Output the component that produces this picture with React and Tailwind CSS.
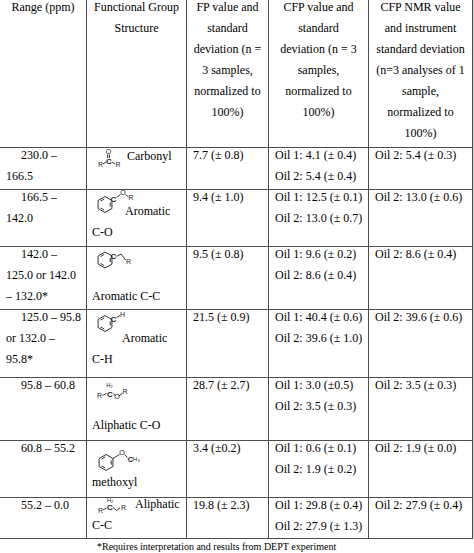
const ink = '#1a1a1a';

function L({ x, y, s = 7, b = false, children }) {
  return (
    <text x={x} y={y + s * 0.34} fontSize={s} fontWeight={b ? 700 : 400} textAnchor="middle" fill={ink} fontFamily="Liberation Sans, Arial, sans-serif">
      {children}
    </text>
  );
}

function Ring({ cx, cy, r = 8 }) {
  const pts = [-90, -30, 30, 90, 150, 210].map((a) => [cx + r * Math.cos((a * Math.PI) / 180), cy + r * Math.sin((a * Math.PI) / 180)]);
  const inner = [-90, -30, 30, 90, 150, 210].map((a) => [cx + (r - 2) * Math.cos((a * Math.PI) / 180), cy + (r - 2) * Math.sin((a * Math.PI) / 180)]);
  const seg = (p, q) => {
    const k = 0.15;
    return [p[0] + (q[0] - p[0]) * k, p[1] + (q[1] - p[1]) * k, q[0] - (q[0] - p[0]) * k, q[1] - (q[1] - p[1]) * k];
  };
  return (
    <g stroke={ink} strokeWidth="0.9" fill="none">
      <polygon points={pts.map((p) => p.join(',')).join(' ')} />
      {[[1, 2], [3, 4], [5, 0]].map(([a, b], i) => {
        const [x1, y1, x2, y2] = seg(inner[a], inner[b]);
        return <line key={i} x1={x1} y1={y1} x2={x2} y2={y2} />;
      })}
    </g>
  );
}

function Bonds({ d }) {
  return <path d={d} stroke={ink} strokeWidth="0.9" fill="none" />;
}

const Carbonyl = () => (
  <svg width="35" height="24" className="shrink-0 overflow-visible">
    <L x={16.5} y={6.5}>O</L>
    <Bonds d="M15.6 9.5 V13 M17.4 9.5 V13 M11 19 L14 17 M20 17 L23 19" />
    <L x={17} y={16} s={8} b>C</L>
    <L x={8.5} y={20}>R</L>
    <L x={26} y={19.5}>R</L>
  </svg>
);

const ArylO = () => (
  <svg width="45" height="24" className="block overflow-visible">
    <Ring cx={13} cy={17.5} />
    <L x={21.5} y={12} s={8} b>C</L>
    <Bonds d="M24.5 10.5 L28.5 7.5 M33.5 7.5 L36.5 10" />
    <L x={31} y={6}>O</L>
    <L x={39} y={11}>R</L>
  </svg>
);

const ArylC = () => (
  <svg width="45" height="42" className="block overflow-visible">
    <Ring cx={13} cy={16} />
    <L x={21.5} y={12.5} s={8} b>C</L>
    <Bonds d="M24.5 12.5 L29 10 L33.5 16" />
    <L x={36.5} y={17.5}>R</L>
  </svg>
);

const ArylH = () => (
  <svg width="45" height="26" className="block overflow-visible">
    <Ring cx={13} cy={16.5} />
    <L x={21.5} y={12} s={8} b>C</L>
    <Bonds d="M24.5 10.5 L28 8.5" />
    <L x={30.5} y={7.5}>H</L>
  </svg>
);

const AlkO = () => (
  <svg width="45" height="40" className="block overflow-visible">
    <L x={16.5} y={9.5} s={6}>H</L>
    <L x={19.5} y={11.5} s={4}>2</L>
    <Bonds d="M10.5 20.5 L14.5 18.5 M21.5 18.5 L23.5 21 M27 21 L30.5 18" />
    <L x={7.5} y={21}>R</L>
    <L x={18} y={19} s={8} b>C</L>
    <L x={25} y={22}>O</L>
    <L x={33} y={16.5}>R</L>
  </svg>
);

const Methoxy = () => (
  <svg width="50" height="34" className="block overflow-visible">
    <Ring cx={14} cy={24.5} />
    <Bonds d="M21 20.5 L27.5 16.5 M32.5 16.5 L35.5 19.5" />
    <L x={30} y={14.5}>O</L>
    <L x={38.5} y={21} s={7.5} b>C</L>
    <L x={43} y={21} s={6}>H</L>
    <L x={46.5} y={22.5} s={4}>3</L>
  </svg>
);

const AlkC = () => (
  <svg width="43" height="20" className="shrink-0 overflow-visible">
    <L x={17} y={4.5} s={6}>H</L>
    <L x={20} y={6.5} s={4}>2</L>
    <Bonds d="M11 15 L14.5 13 M21 12.5 L24.5 15.5 L28 13" />
    <L x={8.5} y={15.5}>R</L>
    <L x={18} y={12} s={8} b>C</L>
    <L x={31.5} y={13}>R</L>
  </svg>
);

const header = [
  ['Range (ppm)'],
  ['Functional Group', 'Structure'],
  ['FP value and', 'standard', 'deviation (n =', '3 samples,', 'normalized to', '100%)'],
  ['CFP value and', 'standard', 'deviation (n = 3', 'samples,', 'normalized to', '100%)'],
  ['CFP NMR value', 'and instrument', 'standard deviation', '(n=3 analyses of 1', 'sample,', 'normalized to', '100%)'],
];

const rows = [
  {
    range: ['230.0 –', '166.5'],
    group: (
      <div className="flex items-start">
        <Carbonyl />
        <span className="mt-[1px]">Carbonyl</span>
      </div>
    ),
    fp: '7.7 (± 0.8)',
    cfp: ['Oil 1: 4.1 (± 0.4)', 'Oil 2: 5.4 (± 0.4)'],
    nmr: 'Oil 2: 5.4 (± 0.3)',
  },
  {
    range: ['166.5 –', '142.0'],
    group: (
      <div>
        <ArylO />
        <div className="-mt-[10px] pl-[33px]">Aromatic</div>
        <div>C-O</div>
      </div>
    ),
    fp: '9.4 (± 1.0)',
    cfp: ['Oil 1: 12.5 (± 0.1)', 'Oil 2: 13.0 (± 0.7)'],
    nmr: 'Oil 2: 13.0 (± 0.6)',
  },
  {
    range: ['142.0 –', '125.0 or 142.0', '– 132.0*'],
    group: (
      <div>
        <ArylC />
        <div>Aromatic C-C</div>
      </div>
    ),
    fp: '9.5 (± 0.8)',
    cfp: ['Oil 1: 9.6 (± 0.2)', 'Oil 2: 8.6 (± 0.4)'],
    nmr: 'Oil 2: 8.6 (± 0.4)',
  },
  {
    range: ['125.0 – 95.8', 'or 132.0 –', '95.8*'],
    group: (
      <div>
        <ArylH />
        <div className="-mt-[5px] pl-[30px]">Aromatic</div>
        <div>C-H</div>
      </div>
    ),
    fp: '21.5 (± 0.9)',
    cfp: ['Oil 1: 40.4 (± 0.6)', 'Oil 2: 39.6 (± 1.0)'],
    nmr: 'Oil 2: 39.6 (± 0.6)',
  },
  {
    range: ['95.8 – 60.8'],
    group: (
      <div>
        <AlkO />
        <div>Aliphatic C-O</div>
      </div>
    ),
    fp: '28.7 (± 2.7)',
    cfp: ['Oil 1: 3.0 (±0.5)', 'Oil 2: 3.5 (± 0.3)'],
    nmr: 'Oil 2: 3.5 (± 0.3)',
  },
  {
    range: ['60.8 – 55.2'],
    group: (
      <div>
        <Methoxy />
        <div>methoxyl</div>
      </div>
    ),
    fp: '3.4 (±0.2)',
    cfp: ['Oil 1: 0.6 (± 0.1)', 'Oil 2: 1.9 (± 0.2)'],
    nmr: 'Oil 2: 1.9 (± 0.0)',
  },
  {
    range: ['55.2 – 0.0'],
    group: (
      <div>
        <div className="flex items-start">
          <AlkC />
          <span className="-mt-[1px]">Aliphatic</span>
        </div>
        <div>C-C</div>
      </div>
    ),
    fp: '19.8 (± 2.3)',
    cfp: ['Oil 1: 29.8 (± 0.4)', 'Oil 2: 27.9 (± 1.3)'],
    nmr: 'Oil 2: 27.9 (± 0.4)',
  },
];

const cell = 'border-r border-b border-[#4d4d4d] overflow-visible';

export default function App() {
  return (
    <div className="w-[474px] h-[553px] overflow-hidden bg-white text-[12px] leading-[21px] text-black font-['Liberation_Serif','Times_New_Roman',serif]">
      <div className="flex">
        <div className="grid grid-cols-[87px_100px_82px_100px_104px] grid-rows-[148px_42px_57px_63px_68px_63px_57px_41px]">
          {header.map((lines, i) => (
            <div key={i} className={cell}>
              <div className="-mt-[3px] text-center whitespace-nowrap">
                {lines.map((t) => (
                  <div key={t}>{t}</div>
                ))}
              </div>
            </div>
          ))}
          {rows.map((r, i) => (
            <div key={i} className="contents">
              <div className={`${cell} pl-[6px]`}>
                <div className="-mt-[3px] whitespace-nowrap">
                  {r.range.map((t, j) => (
                    <div key={j} className={j === 0 ? 'pl-[15px]' : ''}>
                      {t}
                    </div>
                  ))}
                </div>
              </div>
              <div className={`${cell} pl-[5px]`}>
                <div className="-mt-[3px] whitespace-nowrap">{r.group}</div>
              </div>
              <div className={`${cell} pl-[6px]`}>
                <div className="-mt-[3px] whitespace-nowrap">{r.fp}</div>
              </div>
              <div className={`${cell} pl-[6px]`}>
                <div className="-mt-[3px] whitespace-nowrap">
                  {r.cfp.map((t) => (
                    <div key={t}>{t}</div>
                  ))}
                </div>
              </div>
              <div className={`${cell} pl-[6px]`}>
                <div className="-mt-[3px] whitespace-nowrap">{r.nmr}</div>
              </div>
            </div>
          ))}
        </div>
        <div className="w-[1px] bg-[#cfcfcf]" />
      </div>
      <div className="mt-[1px] pl-[97px] whitespace-nowrap text-[10px] leading-[14px]">*Requires interpretation and results from DEPT experiment</div>
    </div>
  );
}
